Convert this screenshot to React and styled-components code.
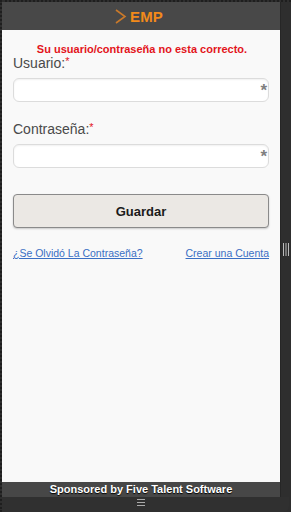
import React from "react";
import styled, { createGlobalStyle } from "styled-components";

const Global = createGlobalStyle`
  html, body { margin: 0; padding: 0; background: #3a3a3a; }
  * { box-sizing: border-box; }
`;

const Frame = styled.div`
  width: 291px;
  height: 512px;
  display: grid;
  grid-template-columns: 278px 11px;
  grid-template-rows: 28px 1fr 15px 15px;
  background: #2e2e2e;
  border-left: 2px dotted #1e1e1e;
  border-top: 2px dotted #1e1e1e;
  font-family: "Liberation Sans", Arial, sans-serif;
  overflow: hidden;
`;

const Header = styled.header`
  grid-column: 1;
  background: #484848;
  display: flex;
  align-items: center;
  justify-content: center;
  gap: 3px;
  padding-right: 4px;
`;

const Brand = styled.span`
  color: #f28a1a;
  font-weight: bold;
  font-size: 15px;
  letter-spacing: 0.2px;
`;

const Content = styled.main`
  grid-column: 1;
  background: #f9f9f9;
  padding: 13px 11px 0 11px;
  display: flex;
  flex-direction: column;
`;

const ErrorMsg = styled.div`
  color: #e3141b;
  text-align: center;
  font-family: "Liberation Sans", Arial, sans-serif;
  font-weight: bold;
  font-size: 11px;
  margin-bottom: 0;
  padding-left: 2px;
`;

const Label = styled.label`
  color: #4a4a4a;
  font-size: 14px;
  display: block;
  margin-bottom: 7px;
`;

const Req = styled.span`
  color: #e3141b;
  font-size: 11px;
  vertical-align: top;
`;

const InputWrap = styled.div`
  position: relative;
  height: 24px;
  background: #fff;
  border: 1px solid #dcdcdc;
  border-radius: 6px;
  box-shadow: inset 0 1px 2px rgba(0, 0, 0, 0.06);
  margin-bottom: ${(p) => p.$mb}px;
`;

const Input = styled.input`
  border: none;
  background: transparent;
  width: 100%;
  height: 100%;
  outline: none;
`;

const Star = styled.span`
  position: absolute;
  right: 1px;
  top: 3px;
  color: #808080;
  font-size: 17px;
  font-weight: bold;
  line-height: 1;
`;

const Button = styled.button`
  height: 34px;
  width: 100%;
  background: #ebe8e4;
  border: 1px solid #8a8a8a;
  border-radius: 4px;
  box-shadow: 0 1px 2px rgba(0, 0, 0, 0.2);
  font-family: "Liberation Sans", Arial, sans-serif;
  font-weight: bold;
  font-size: 13px;
  color: #1a1a1a;
  margin-top: 26px;
`;

const Links = styled.div`
  display: flex;
  justify-content: space-between;
  margin-top: 19px;
`;

const Link = styled.a`
  color: #3a6fc4;
  font-size: 10.5px;
  text-decoration: underline;
`;

const Footer = styled.div`
  grid-column: 1;
  background: #474747;
  color: #fff;
  font-weight: bold;
  font-size: 11px;
  text-align: center;
  line-height: 15px;
  text-shadow: 0 1px 1px #000;
`;

const Bottom = styled.div`
  grid-column: 1 / 3;
  grid-row: 4;
  background: #303030;
  border-bottom-right-radius: 6px;
  display: flex;
  justify-content: center;
  padding-top: 2px;
  margin-right: 2px;
  margin-left: -2px;
  padding-right: 8px;
`;

const Side = styled.div`
  grid-column: 2;
  grid-row: 1 / 4;
  background: #2e2e2e;
  border-left: 1px solid #262626;
  display: flex;
  align-items: center;
  justify-content: center;
`;

function Grip({ vertical }) {
  if (vertical) {
    return (
      <svg width="6" height="13" viewBox="0 0 6 13">
        <rect x="0" y="0" width="1" height="13" fill="#bbb" />
        <rect x="2.5" y="0" width="1" height="13" fill="#bbb" />
        <rect x="5" y="0" width="1" height="13" fill="#bbb" />
      </svg>
    );
  }
  return (
    <svg width="8" height="7" viewBox="0 0 8 7">
      <rect x="0" y="0" width="8" height="1" fill="#aaa" />
      <rect x="0" y="3" width="8" height="1" fill="#aaa" />
      <rect x="0" y="6" width="8" height="1" fill="#aaa" />
    </svg>
  );
}

function Chevron() {
  return (
    <svg width="12" height="15" viewBox="0 0 12 15">
      <path d="M1 1 L10 7.5 L1 14" fill="none" stroke="#c9792a" strokeWidth="1.6" />
    </svg>
  );
}

export default function App() {
  return (
    <>
      <Global />
      <Frame>
        <Header>
          <Chevron />
          <Brand>EMP</Brand>
        </Header>
        <Content>
          <ErrorMsg>Su usuario/contraseña no esta correcto.</ErrorMsg>
          <Label>
            Usuario:<Req>*</Req>
          </Label>
          <InputWrap $mb={19}>
            <Input type="text" />
            <Star>*</Star>
          </InputWrap>
          <Label>
            Contraseña:<Req>*</Req>
          </Label>
          <InputWrap $mb={0}>
            <Input type="password" />
            <Star>*</Star>
          </InputWrap>
          <Button>Guardar</Button>
          <Links>
            <Link href="#">¿Se Olvidó La Contraseña?</Link>
            <Link href="#">Crear una Cuenta</Link>
          </Links>
        </Content>
        <Footer>Sponsored by Five Talent Software</Footer>
        <Side>
          <Grip vertical />
        </Side>
        <Bottom>
          <Grip />
        </Bottom>
      </Frame>
    </>
  );
}
